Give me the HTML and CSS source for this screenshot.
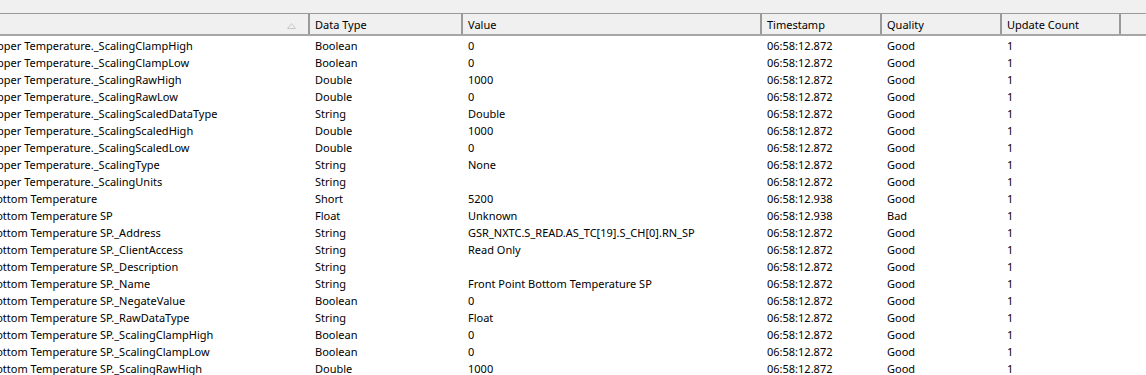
FILE: index.html
```html
<!DOCTYPE html>
<html lang="en">
<head>
    <meta charset="UTF-8">
    <title>Tag Monitor</title>
    <link rel="stylesheet" href="styles.css">
</head>
<body>
    <div class="toolbar"></div>

    <div class="list-view">
        <table class="tag-table">
            <colgroup>
                <col class="col-name">
                <col class="col-type">
                <col class="col-value">
                <col class="col-time">
                <col class="col-quality">
                <col class="col-count">
                <col class="col-rest">
            </colgroup>
            <thead>
                <tr>
                    <th class="sorted">
                        <svg class="sort-arrow" width="9" height="6" viewBox="0 0 9 6"><path d="M0.5 5.5 L4.5 0.5 L8.5 5.5 Z" fill="none" stroke="#c8c8c8" stroke-width="1"/></svg>
                    </th>
                    <th>Data Type</th>
                    <th>Value</th>
                    <th>Timestamp</th>
                    <th>Quality</th>
                    <th>Update Count</th>
                    <th></th>
                </tr>
            </thead>
            <tbody>
                <tr><td>Upper Temperature._ScalingClampHigh</td><td>Boolean</td><td>0</td><td>06:58:12.872</td><td>Good</td><td>1</td><td></td></tr>
                <tr><td>Upper Temperature._ScalingClampLow</td><td>Boolean</td><td>0</td><td>06:58:12.872</td><td>Good</td><td>1</td><td></td></tr>
                <tr><td>Upper Temperature._ScalingRawHigh</td><td>Double</td><td>1000</td><td>06:58:12.872</td><td>Good</td><td>1</td><td></td></tr>
                <tr><td>Upper Temperature._ScalingRawLow</td><td>Double</td><td>0</td><td>06:58:12.872</td><td>Good</td><td>1</td><td></td></tr>
                <tr><td>Upper Temperature._ScalingScaledDataType</td><td>String</td><td>Double</td><td>06:58:12.872</td><td>Good</td><td>1</td><td></td></tr>
                <tr><td>Upper Temperature._ScalingScaledHigh</td><td>Double</td><td>1000</td><td>06:58:12.872</td><td>Good</td><td>1</td><td></td></tr>
                <tr><td>Upper Temperature._ScalingScaledLow</td><td>Double</td><td>0</td><td>06:58:12.872</td><td>Good</td><td>1</td><td></td></tr>
                <tr><td>Upper Temperature._ScalingType</td><td>String</td><td>None</td><td>06:58:12.872</td><td>Good</td><td>1</td><td></td></tr>
                <tr><td>Upper Temperature._ScalingUnits</td><td>String</td><td></td><td>06:58:12.872</td><td>Good</td><td>1</td><td></td></tr>
                <tr><td>Bottom Temperature</td><td>Short</td><td>5200</td><td>06:58:12.938</td><td>Good</td><td>1</td><td></td></tr>
                <tr><td>Bottom Temperature SP</td><td>Float</td><td>Unknown</td><td>06:58:12.938</td><td>Bad</td><td>1</td><td></td></tr>
                <tr><td>Bottom Temperature SP._Address</td><td>String</td><td>GSR_NXTC.S_READ.AS_TC[19].S_CH[0].RN_SP</td><td>06:58:12.872</td><td>Good</td><td>1</td><td></td></tr>
                <tr><td>Bottom Temperature SP._ClientAccess</td><td>String</td><td>Read Only</td><td>06:58:12.872</td><td>Good</td><td>1</td><td></td></tr>
                <tr><td>Bottom Temperature SP._Description</td><td>String</td><td></td><td>06:58:12.872</td><td>Good</td><td>1</td><td></td></tr>
                <tr><td>Bottom Temperature SP._Name</td><td>String</td><td>Front Point Bottom Temperature SP</td><td>06:58:12.872</td><td>Good</td><td>1</td><td></td></tr>
                <tr><td>Bottom Temperature SP._NegateValue</td><td>Boolean</td><td>0</td><td>06:58:12.872</td><td>Good</td><td>1</td><td></td></tr>
                <tr><td>Bottom Temperature SP._RawDataType</td><td>String</td><td>Float</td><td>06:58:12.872</td><td>Good</td><td>1</td><td></td></tr>
                <tr><td>Bottom Temperature SP._ScalingClampHigh</td><td>Boolean</td><td>0</td><td>06:58:12.872</td><td>Good</td><td>1</td><td></td></tr>
                <tr><td>Bottom Temperature SP._ScalingClampLow</td><td>Boolean</td><td>0</td><td>06:58:12.872</td><td>Good</td><td>1</td><td></td></tr>
                <tr><td>Bottom Temperature SP._ScalingRawHigh</td><td>Double</td><td>1000</td><td>06:58:12.872</td><td>Good</td><td>1</td><td></td></tr>
            </tbody>
        </table>
    </div>
</body>
</html>
```

FILE: styles.css
```css
:root {
    --chrome: #f0f0f0;
    --header-bg: #f0f0f0;
    --line: #a0a0a0;
    --text: #000000;
}

body {
    margin: 0;
    font-family: "Noto Sans", "DejaVu Sans", sans-serif;
    font-size: 11px;
    color: var(--text);
    background: #ffffff;
    height: 375px;
    overflow: hidden;
}

.toolbar {
    height: 13px;
    background: var(--chrome);
    border-bottom: 1px solid #999999;
}

.list-view {
    overflow: hidden;
}

/* the list is scrolled a little to the right, so the name column is cut off */
.tag-table {
    margin-left: -17px;
    width: 1200px;
    table-layout: fixed;
    border-collapse: collapse;
    border-spacing: 0;
}

.col-name { width: 326px; }
.col-type { width: 153px; }
.col-value { width: 299px; }
.col-time { width: 120px; }
.col-quality { width: 120px; }
.col-count { width: 119px; }

th {
    height: 17px;
    padding: 2px 0 0 5px;
    line-height: 18px;
    background: var(--header-bg);
    border-right: 2px solid #9a9a9a;
    border-bottom: 2px solid #a6a6a6;
    font-weight: normal;
    text-align: left;
    white-space: nowrap;
    overflow: hidden;
}

th.sorted {
    text-align: right;
    padding-right: 12px;
}

.sort-arrow {
    display: inline-block;
    vertical-align: middle;
}

tbody tr:first-child td {
    padding-top: 1px;
}

td {
    height: 17px;
    padding: 0 0 0 6px;
    white-space: nowrap;
    overflow: hidden;
    line-height: 17px;
}
```
